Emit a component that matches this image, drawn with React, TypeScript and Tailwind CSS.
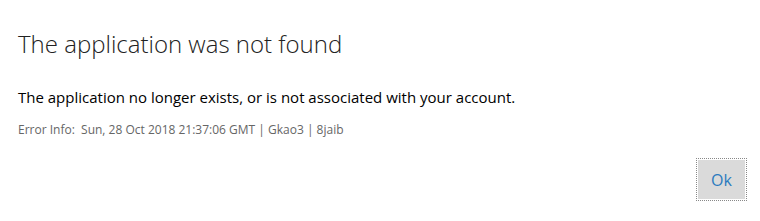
export default function App() {
  return (
    <div className="w-[760px] h-[221px] bg-white flex flex-col" style={{ fontFamily: '"Open Sans", "Noto Sans", sans-serif' }}>
      <div className="pl-[18px] pt-[27px]">
        <h1 className="text-[24px] leading-[34px] font-light text-[#222]">The application was not found</h1>
        <p className="mt-[26px] text-[15px] leading-[20px] text-black">The application no longer exists, or is not associated with your account.</p>
        <p className="mt-[15px] text-[12px] leading-[16px] text-[#666]">Error Info:&nbsp; Sun, 28 Oct 2018 21:37:06 GMT | Gkao3 | 8jaib</p>
      </div>
      <div className="flex justify-end pr-[13px] mt-auto pb-[20px]">
        <button className="w-[51px] h-[43px] border border-dotted border-[#888] p-[1px]">
          <span className="flex w-full h-full items-center justify-center bg-[#dadada] text-[16px] text-[#2b7bbf]">Ok</span>
        </button>
      </div>
    </div>
  );
}
